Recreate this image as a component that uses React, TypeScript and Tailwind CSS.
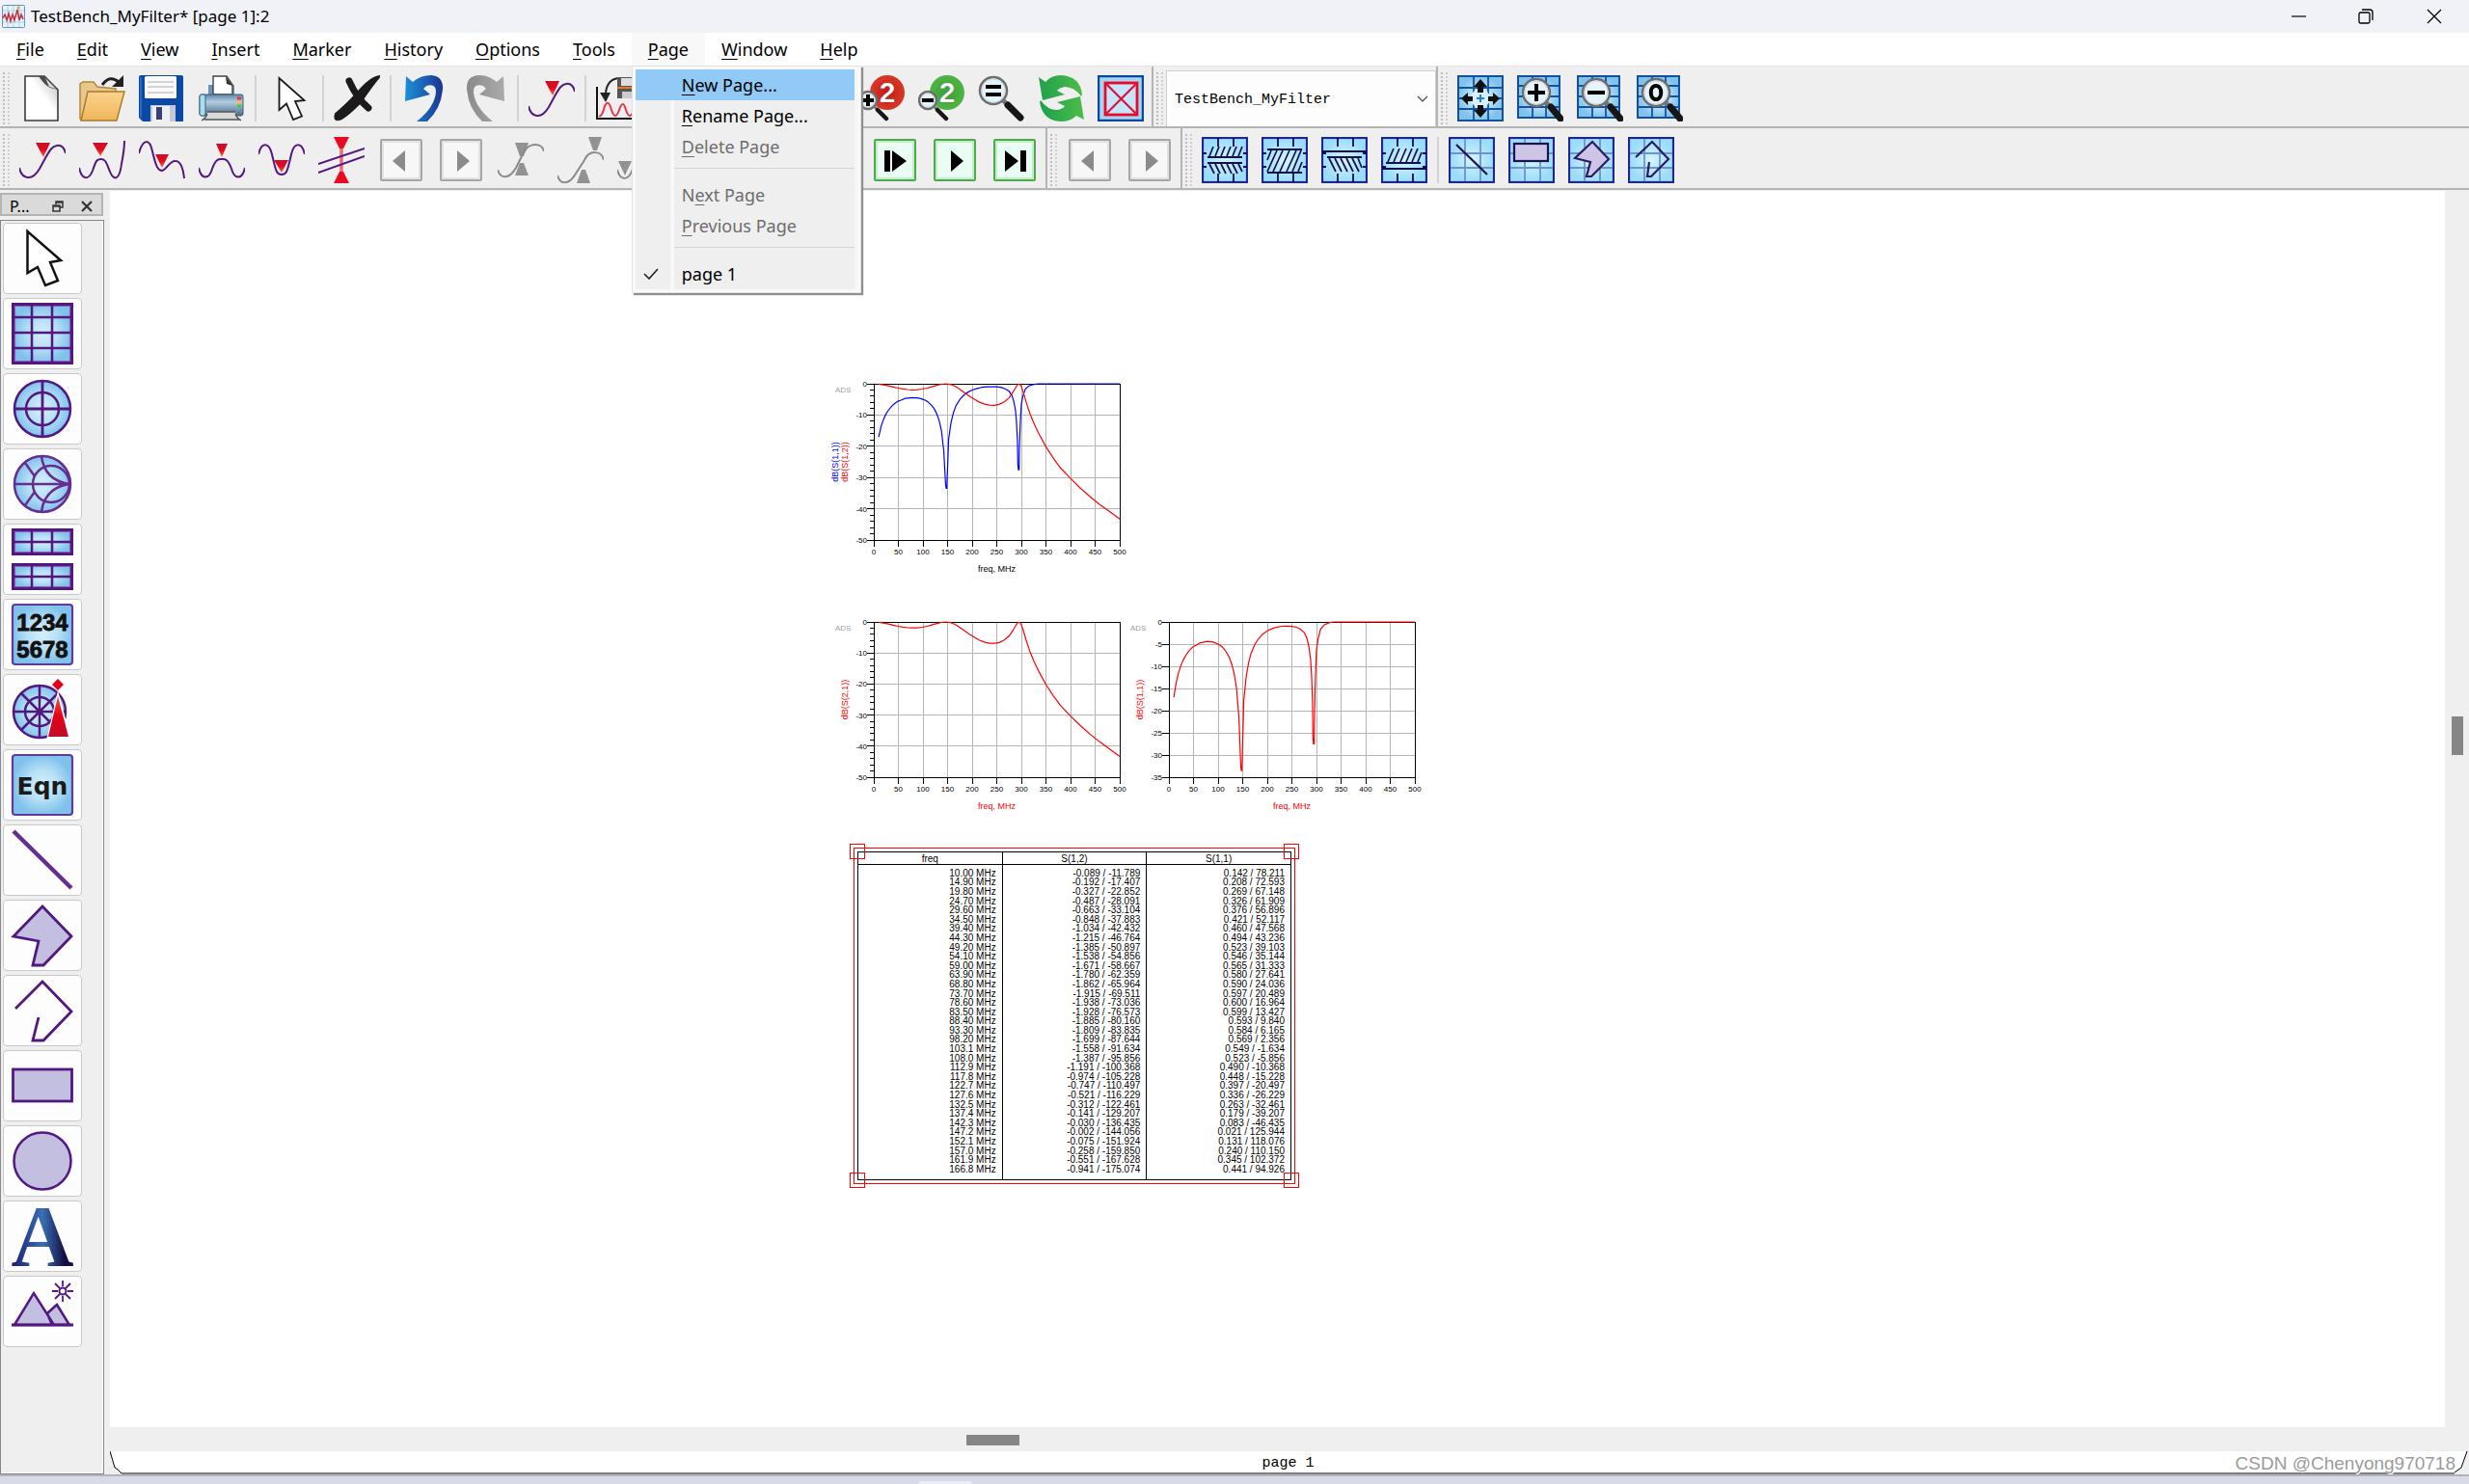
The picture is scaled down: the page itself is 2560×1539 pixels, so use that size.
import React from "react";

type Pt = [number, number];

/* ---------- shared pieces ---------- */

function Svg48({ children }: { children: React.ReactNode }) {
  return (
    <svg viewBox="0 0 48 48" className="size-12" fill="none" aria-hidden="true">
      {children}
    </svg>
  );
}

function ToolButton({ label, children }: { label: string; children: React.ReactNode }) {
  return (
    <button type="button" aria-label={label} className="flex h-14 w-[62px] shrink-0 items-center justify-center">
      {children}
    </button>
  );
}

const Sep = () => <div className="mx-[3px] h-12 w-[2px] shrink-0 bg-[#d2d2d2]" />;

function Handle() {
  return (
    <div className="flex w-[13px] shrink-0 items-center justify-center gap-[3px]">
      <div className="h-[54px] border-l-2 border-dotted border-[#bdbdbd]" />
      <div className="h-[54px] border-l-2 border-dotted border-[#cfcfcf]" />
    </div>
  );
}

function Group({ children, last }: { children: React.ReactNode; last?: boolean }) {
  return (
    <div
      className={
        last
          ? "flex flex-1 items-center border-b-2 border-[#b4b4b4] pt-1"
          : "flex items-center border-r-2 border-b-2 border-[#b4b4b4] pt-1 pr-px"
      }
    >
      <Handle />
      {children}
    </div>
  );
}

/* ---------- toolbar icons ---------- */

function Defs() {
  return (
    <svg className="absolute size-0" aria-hidden="true">
      <defs>
        <linearGradient id="gPaper" x1="0" y1="1" x2="1" y2="0">
          <stop offset="0.55" stopColor="#fff" />
          <stop offset="1" stopColor="#b9b9bd" />
        </linearGradient>
        <linearGradient id="gFolder" x1="0" y1="0" x2="0" y2="1">
          <stop offset="0" stopColor="#fbd38c" />
          <stop offset="1" stopColor="#efb65c" />
        </linearGradient>
        <linearGradient id="gPrint" x1="0" y1="0" x2="0" y2="1">
          <stop offset="0" stopColor="#5f86a8" />
          <stop offset="0.35" stopColor="#b4cde0" />
          <stop offset="1" stopColor="#47698a" />
        </linearGradient>
        <linearGradient id="gUndo" x1="0" y1="0" x2="1" y2="0">
          <stop offset="0" stopColor="#1c92d6" />
          <stop offset="1" stopColor="#1b3494" />
        </linearGradient>
        <linearGradient id="gRedo" x1="0" y1="0" x2="1" y2="0">
          <stop offset="0" stopColor="#ababab" />
          <stop offset="1" stopColor="#8a8a8a" />
        </linearGradient>
        <linearGradient id="gTri" x1="0" y1="0" x2="0" y2="1">
          <stop offset="0" stopColor="#c4122c" />
          <stop offset="0.5" stopColor="#e30a1c" />
          <stop offset="1" stopColor="#ff6a3c" />
        </linearGradient>
        <radialGradient id="gRed">
          <stop offset="0" stopColor="#c11a1a" />
          <stop offset="1" stopColor="#d83a26" />
        </radialGradient>
        <radialGradient id="gGreen">
          <stop offset="0" stopColor="#3c9f34" />
          <stop offset="1" stopColor="#4db545" />
        </radialGradient>
        <radialGradient id="gSky">
          <stop offset="0" stopColor="#d3effc" />
          <stop offset="0.5" stopColor="#b8e0f6" />
          <stop offset="1" stopColor="#80c2ec" />
        </radialGradient>
        <radialGradient id="gCyan">
          <stop offset="0" stopColor="#d6f4fe" />
          <stop offset="1" stopColor="#9adcf9" />
        </radialGradient>
        <linearGradient id="gRefresh" x1="0" y1="0" x2="1" y2="0">
          <stop offset="0" stopColor="#1fa04c" />
          <stop offset="1" stopColor="#4bbd49" />
        </linearGradient>
        <linearGradient id="gLetter" x1="0" y1="0" x2="1" y2="0">
          <stop offset="0" stopColor="#1d1a70" />
          <stop offset="0.5" stopColor="#3a70b4" />
          <stop offset="0.85" stopColor="#141043" />
        </linearGradient>
        <linearGradient id="gCone" x1="0" y1="0" x2="0" y2="1">
          <stop offset="0" stopColor="#ee5a32" />
          <stop offset="0.5" stopColor="#e3001b" />
          <stop offset="1" stopColor="#c10d26" />
        </linearGradient>
      </defs>
    </svg>
  );
}

const NewIcon = () => (
  <Svg48>
    <path d="M6 1H26L40 15V47H6Z" fill="url(#gPaper)" stroke="#3a3a3a" strokeWidth="1.6" />
    <path d="M20 1H26L40 15L32 13Q26 10 20 1Z" fill="#4a4a4a" />
    <path d="M27 3L38 14L31 12Z" fill="#d9d9d9" />
  </Svg48>
);
const OpenIcon = () => (
  <Svg48>
    <path d="M1 45V9L4 7H15L19 12L38 14V20L10 30L3 46Z" fill="#e6c88f" stroke="#b5883a" strokeWidth="1.5" />
    <path d="M9 17H47L39 47H2Z" fill="url(#gFolder)" stroke="#a8782a" strokeWidth="1.4" />
    <path d="M24 10Q32 -1 41 7" stroke="#222" strokeWidth="3" />
    <path d="M46 0V12H34Z" fill="#222" />
  </Svg48>
);
const SaveIcon = () => (
  <Svg48>
    <path d="M0 2Q0 0 2 0H44Q46 0 46 2V48H4L0 44Z" fill="#0b49a5" />
    <path d="M2 2V44" stroke="#2f74cc" strokeWidth="1.6" />
    <rect x="6" y="1" width="33" height="23" rx="1.5" fill="#fafafa" />
    <path d="M9 7H36M9 12H36M9 18H36" stroke="#c6c6c6" strokeWidth="1.5" />
    <rect x="12" y="31" width="26" height="17" fill="#c4c8d8" />
    <rect x="14" y="32" width="18" height="16" fill="#f0f0f3" />
    <rect x="18" y="33" width="6" height="13" fill="#3c3f74" />
  </Svg48>
);
const PrintIcon = () => (
  <Svg48>
    <rect x="10" y="10" width="27" height="14" fill="#6d93b3" />
    <path d="M15 20V1H29L35 10V20Z" fill="#fff" stroke="#444" strokeWidth="1.4" />
    <path d="M28 1L35 11L29 9Z" fill="#333" />
    <rect x="1" y="20" width="45" height="22" rx="2" fill="url(#gPrint)" stroke="#3c6079" />
    <rect x="1" y="20" width="6" height="22" rx="2" fill="#a8dcf1" stroke="#3c6079" />
    <path d="M40 24H44" stroke="#e8344a" strokeWidth="3" />
    <path d="M40 28H44" stroke="#f3c33a" strokeWidth="3" />
    <path d="M40 32H44" stroke="#4fc34a" strokeWidth="3" />
    <path d="M9 38H38Q38 43 44 47H3Q9 43 9 38Z" fill="#d9d9d9" />
    <path d="M9 38H38M3 47Q8 44 9 40M44 47Q39 44 38 40M6 46H42" stroke="#555" strokeWidth="1.3" />
  </Svg48>
);
const CursorIcon = () => (
  <Svg48>
    <path d="M13.500 3V36L21 29.500L28 46L37 42.500L30 27L39.500 26Z" fill="#fff" stroke="#1a1a1a" strokeWidth="1.8" />
  </Svg48>
);
const DeleteIcon = () => (
  <Svg48>
    <path d="M16 6Q24 24 36 34" stroke="#1c1a1b" strokeWidth="7" strokeLinecap="round" />
    <path d="M48 1Q38 2 24 19Q12 32 2 40Q0 47 5 46Q10 46 28 28Q40 10 48 1Z" fill="#1c1a1b" stroke="#1c1a1b" strokeWidth="2" />
  </Svg48>
);
const UNDO = "M7 1L14 7Q22 0 33 0Q46 1 45 15Q43 35 29 48H18Q37 33 38 17Q38 8 28 11L25 14L32 20L6 27Z";
const UndoIcon = () => (
  <Svg48>
    <path transform="translate(-2 0)" d={UNDO} fill="url(#gUndo)" />
  </Svg48>
);
const RedoIcon = () => (
  <Svg48>
    <path transform="matrix(-1 0 0 1 51 0)" d={UNDO} fill="url(#gRedo)" />
  </Svg48>
);

function Wave({ d, tri, muted }: { d: string; tri: string; muted?: boolean }) {
  return (
    <Svg48>
      {muted ? <path d={tri} fill="#929292" /> : <path d={tri} fill="url(#gTri)" />}
      <path d={d} stroke={muted ? "#8a8a8a" : "#52187f"} strokeWidth="2" />
    </Svg48>
  );
}
const Mark1 = () => <Wave d="M0 32C2 42 12 48 21 33L27 22C32 13 34 10 39 9C44 8 47 12 48 17" tri="M17 6H32L25 21Z" />;
const Mark2 = () => <Wave d="M0 32C3 45 10 45 14 35C18 23 19 23 23 23C28 23 29 29 32 36C36 46 42 45 44 28C46 18 47 10 47 4" tri="M14 6H30L22 20Z" />;
const Mark3 = () => <Wave d="M0 17C4 2 11 1 14 15C18 32 20 35 24 35C29 34 32 24 38 25C44 25 46 34 47 43" tri="M17 18H31L24 32Z" />;
const Mark4 = () => <Wave d="M0 32C3 45 11 44 14 33C18 22 21 23 24 23C27 23 30 22 34 33C37 44 45 45 48 32" tri="M18 7H30L24 21Z" />;
const Mark5 = () => <Wave d="M0 18C3 5 11 5 14 18C18 36 19 39 24 39C29 39 30 36 34 18C37 5 45 5 48 18" tri="M16 24H31L24 37Z" />;
const Mark6 = () => (
  <Svg48>
    <path d="M24 8V40" stroke="#f2667c" strokeWidth="3.500" />
    <path d="M16 0H32L26 12H22ZM16 48H32L26 36H22Z" fill="#ea0a20" />
    <path d="M0 28L48 12M0 37L48 20" stroke="#52187f" strokeWidth="2" />
  </Svg48>
);
const MutedTwin = () => <Wave muted d="M0 34C3 44 12 44 19 32L27 16C32 6 46 5 48 15" tri="M18 6H32L27 20H23ZM18 40H32L27 27H23Z" />;
const MutedSlope = () => <Wave muted d="M0 40C3 50 12 50 19 38L28 24C33 13 46 14 48 24" tri="M32 0H46L41 14H37ZM20 48H34L29 34H25Z" />;
const MutedValley = () => <Wave muted d="M0 34C3 46 12 46 16 33C20 22 28 22 32 33C36 46 45 46 48 34" tri="M1 25H15L8 40Z" />;

function NavIcon({ d, active }: { d: string; active?: boolean }) {
  return (
    <Svg48>
      {active ? (
        <rect x="3" y="3" width="42" height="42" rx="1" fill="#eafdf3" stroke="#4bab4a" strokeWidth="2" />
      ) : (
        <rect x="3" y="3" width="42" height="42" rx="1" fill="#f7f7f7" stroke="#a6a6a6" strokeWidth="2" />
      )}
      <rect x="5" y="5" width="38" height="38" stroke={active ? "#c6ebcd" : "#e2e2e2"} strokeWidth="2" />
      <path d={d} fill={active ? "#000" : "#8b8b8b"} />
    </Svg48>
  );
}
const LEFT = "M15 25L28 14V36Z";
const RIGHT = "M33 25L20 14V36Z";

const ReadDataIcon = () => (
  <Svg48>
    <path d="M1 12V45H48" stroke="#111" strokeWidth="2" />
    <path d="M3 42Q6 44 9 32Q13 24 16 36Q20 48 24 36Q28 24 31 36Q35 48 39 36Q43 24 46 42" stroke="#e8344a" strokeWidth="2" />
    <path d="M25 3Q12 3 10 18" stroke="#222" strokeWidth="2" />
    <path d="M4 18H15L10 28Z" fill="#222" />
    <path d="M22 2H46V24H22Z" fill="#555" />
    <path d="M26 3H42V11H26Z" fill="#ddd" />
    <path d="M22 12H46V14H22Z" fill="#e8752a" />
    <path d="M27 17H40V24H27Z" fill="#ccc" />
  </Svg48>
);

function Lens({ x, y, r, sign, end }: { x: number; y: number; r: number; sign: string; end: Pt }) {
  const k = r * 0.75;
  return (
    <>
      <path d={`M${x + k} ${y + k}L${end[0]} ${end[1]}`} stroke="#777" strokeWidth={r / 3} />
      <path d={`M${x + r + 1} ${y + r + 1}L${end[0]} ${end[1]}`} stroke="#161616" strokeWidth={r / 2} strokeLinecap="round" />
      <circle cx={x} cy={y} r={r} fill="#e3f4fd" stroke="#6e6e6e" strokeWidth="2.500" />
      <circle cx={x} cy={y} r={r - 2} stroke="#d5d5d5" strokeWidth="1" />
      <path d={sign} stroke="#000" strokeWidth="4" />
    </>
  );
}

function Zoom2({ fill, sign }: { fill: string; sign: string }) {
  return (
    <Svg48>
      <circle cx="30" cy="18" r="18" fill={fill} />
      <text x="30" y="28" textAnchor="middle" fontSize="30" fontWeight="700" fontFamily="Liberation Sans, sans-serif" fill="#fff" stroke="#00000055" strokeWidth="0.6">2</text>
      <Lens x={10} y={26} r={9} sign={sign} end={[29, 45]} />
    </Svg48>
  );
}
const ZoomEqIcon = () => (
  <Svg48>
    <Lens x={16} y={16} r={14} sign="M8 12H24M8 20H24" end={[44, 44]} />
  </Svg48>
);
const RefreshIcon = () => (
  <Svg48>
    <path d="M1 2L8 7Q14 0 24 0Q44 1 46 20L45 22Q38 12 28 12Q22 13 20 16L28 20L5 26Z" fill="url(#gRefresh)" />
    <path d="M48 46L40 42Q34 48 24 48Q5 47 2 28L3 26Q10 36 20 36Q26 35 28 32L20 28L44 22Z" fill="url(#gRefresh)" />
  </Svg48>
);
const ClearIcon = () => (
  <Svg48>
    <rect x="1" y="1" width="46" height="46" fill="#a6d4f2" stroke="#0a479b" strokeWidth="2.500" />
    <rect x="8" y="8" width="33" height="33" fill="#c5e5f8" stroke="#ea0a28" strokeWidth="2.800" />
    <path d="M9 9L40 40M40 9L9 40" stroke="#d8143a" strokeWidth="2.200" />
  </Svg48>
);

function GridBase({ full }: { full?: boolean }) {
  const s = full ? 46 : 43;
  return (
    <>
      <rect x="1" y="1" width={s} height={s} fill="url(#gSky)" stroke="#10509e" strokeWidth="2" />
      <path d={full ? "M17 1V47M32 1V47M1 13H47M1 24H47M1 35H47" : "M16 1V44M30 1V44M1 11H44M1 22H44M1 33H44"} stroke="#14529f" strokeWidth="1.800" />
    </>
  );
}
const FitIcon = () => (
  <Svg48>
    <GridBase full />
    <circle cx="24" cy="24" r="10" fill="#d6effb" />
    <path d="M20 24H28M24 20V28" stroke="#2b7fd0" strokeWidth="2" />
    <path d="M24 4L31 12H27V18H21V12H17ZM24 44L31 36H27V31H21V36H17ZM4 24L11 18V22H16V27H11V31ZM44 24L37 18V22H32V27H37V31Z" fill="#111" />
  </Svg48>
);
const GridLens = ({ sign }: { sign: string }) => (
  <Svg48>
    <GridBase />
    <Lens x={20} y={18} r={14} sign={sign} end={[45, 45]} />
  </Svg48>
);

function MaskIcon({ d, rails }: { d: string; rails: string }) {
  return (
    <Svg48>
      <rect x="1" y="1" width="46" height="46" fill="url(#gCyan)" stroke="#20278c" strokeWidth="2.200" />
      <path d="M17 1V10M33 1V10M17 38V47M33 38V47M1 17H5M43 17H47M1 31H5M43 31H47" stroke="#12104f" strokeWidth="1.800" />
      <path d={rails} stroke="#12104f" strokeWidth="2.200" />
      <path d={d} stroke="#12104f" strokeWidth="1.700" />
    </Svg48>
  );
}
function ShapeIcon({ children }: { children: React.ReactNode }) {
  return (
    <Svg48>
      <rect x="1" y="1" width="46" height="46" fill="url(#gCyan)" stroke="#20278c" strokeWidth="2.200" />
      <path d="M17 2V46M33 2V46M2 17H46M2 32H46" stroke="#6e93c9" strokeWidth="1.800" />
      {children}
    </Svg48>
  );
}

/* ---------- palette icons ---------- */

const P = "#52187f";
const Svg64 = ({ children }: { children: React.ReactNode }) => (
  <svg viewBox="0 0 64 64" className="size-16 overflow-visible" fill="none" aria-hidden="true">
    {children}
  </svg>
);

const MiniGrid = ({ y, h, rows }: { y: number; h: number; rows: number[] }) => (
  <>
    <rect x="1.500" y={y + 1.5} width="61" height={h - 3} fill="url(#gSky)" stroke={P} strokeWidth="3" />
    <path d={`M3.500 ${y + 3.5}H60.500V${y + h - 3.5}H3.500Z`} stroke="#8a63ad" strokeWidth="1.200" />
    <path d={`M21 ${y}V${y + h}M42 ${y}V${y + h}`} stroke={P} strokeWidth="2.500" />
    {rows.map((r) => (
      <path key={r} d={`M0 ${r}H64`} stroke={P} strokeWidth="2.500" />
    ))}
  </>
);

const palette: { label: string; icon: React.ReactNode }[] = [
  {
    label: "Select",
    icon: <path d="M16.500 4L16.500 47L27 41L35 60L48 55L40 36L51 34Z" fill="#fff" stroke="#111" strokeWidth="2.500" />,
  },
  { label: "Rectangular plot", icon: <MiniGrid y={0} h={64} rows={[15, 31, 47]} /> },
  {
    label: "Polar plot",
    icon: (
      <>
        <circle cx="32" cy="32" r="29" fill="url(#gSky)" stroke={P} strokeWidth="2.500" />
        <circle cx="32" cy="32" r="17" stroke={P} strokeWidth="2.500" />
        <path d="M32 3V61M3 32H61" stroke={P} strokeWidth="2.800" />
      </>
    ),
  },
  {
    label: "Smith chart",
    icon: (
      <>
        <circle cx="32" cy="32" r="29" fill="url(#gSky)" stroke="#662d91" strokeWidth="2.500" />
        <circle cx="41" cy="32" r="19" stroke="#662d91" strokeWidth="2.500" />
        <path d="M3 32H61M31 3Q34 28 60 32Q34 36 31 61M14 10L24 24M14 54L24 40" stroke="#662d91" strokeWidth="2.500" />
      </>
    ),
  },
  {
    label: "Stacked plot",
    icon: (
      <>
        <MiniGrid y={0} h={28} rows={[14]} />
        <MiniGrid y={36} h={28} rows={[50]} />
      </>
    ),
  },
  {
    label: "List",
    icon: (
      <>
        <rect x="1" y="1" width="62" height="62" rx="3" fill="url(#gSky)" stroke="#613a9a" strokeWidth="2.200" />
        <text x="32" y="28" textAnchor="middle" fontFamily="Liberation Sans, sans-serif" fontWeight="700" fontSize="24" fill="#111" stroke="#111" strokeWidth="0.8">1234</text>
        <text x="32" y="56" textAnchor="middle" fontFamily="Liberation Sans, sans-serif" fontWeight="700" fontSize="24" fill="#111" stroke="#111" strokeWidth="0.8">5678</text>
      </>
    ),
  },
  {
    label: "Antenna plot",
    icon: (
      <>
        <circle cx="29" cy="34" r="27" fill="url(#gSky)" stroke={P} strokeWidth="2.500" />
        <circle cx="29" cy="34" r="15" stroke={P} strokeWidth="2.500" />
        <path d="M29 7V61M2 34H56M10 15L48 53M10 53L48 15" stroke={P} strokeWidth="2.500" />
        <path d="M48 12L62 64H36Z" fill="#fff" />
        <path d="M48 18L59 60H38Z" fill="url(#gCone)" />
        <path d="M48 0L54 6L48 12L42 6Z" fill="#e3001b" />
      </>
    ),
  },
  {
    label: "Equation",
    icon: (
      <>
        <rect x="1" y="1" width="62" height="62" rx="3" fill="url(#gSky)" stroke="#613a9a" strokeWidth="2.200" />
        <text x="32" y="42" textAnchor="middle" fontFamily="DejaVu Sans, sans-serif" fontWeight="700" fontSize="25" fill="#1a1a1a">Eqn</text>
      </>
    ),
  },
  { label: "Line", icon: <path d="M2 2L62 61" stroke="#662d91" strokeWidth="4.500" /> },
  { label: "Polygon", icon: <path d="M32 2L62 33L33 63H22L28 38L2 33Z" fill="#c3bfe0" stroke={P} strokeWidth="2.800" /> },
  { label: "Polyline", icon: <path d="M4 30L32 2L62 33L33 63H22L28 39" stroke={P} strokeWidth="2.800" /> },
  { label: "Rectangle", icon: <rect x="1.500" y="15" width="61" height="33" fill="#c3bfe0" stroke={P} strokeWidth="2.800" /> },
  { label: "Circle", icon: <circle cx="32" cy="32" r="29.500" fill="#c3bfe0" stroke={P} strokeWidth="2.500" /> },
  {
    label: "Text",
    icon: <text x="32" y="63" textAnchor="middle" fontFamily="Liberation Serif, serif" fontWeight="700" fontSize="90" fill="url(#gLetter)">A</text>,
  },
  {
    label: "Picture",
    icon: (
      <>
        <path d="M3 46L23 13L44 46ZM37 34L47 25L60 46H42Z" fill="#c3bfe0" stroke={P} strokeWidth="2.500" />
        <path d="M0 46H64" stroke={P} strokeWidth="3" />
        <circle cx="53" cy="11" r="3.500" stroke={P} strokeWidth="2" />
        <path d="M53 0V6M53 16V22M42 11H48M58 11H64M45 3L50 8M56 14L61 19M61 3L56 8M50 14L45 19" stroke={P} strokeWidth="1.800" />
      </>
    ),
  },
];

/* ---------- plots ---------- */

const s11: Pt[] = [
  [10, -17], [14.9, -13.6], [19.8, -11.4], [24.7, -9.7], [29.6, -8.5], [34.5, -7.5], [39.4, -6.7], [44.3, -6.1],
  [49.2, -5.6], [54.1, -5.3], [59, -5], [63.9, -4.7], [68.8, -4.6], [73.7, -4.5], [78.6, -4.4], [83.5, -4.5],
  [88.4, -4.5], [93.3, -4.7], [98.2, -4.9], [103.1, -5.2], [108, -5.6], [112.9, -6.2], [117.8, -7], [122.7, -8],
  [127.6, -9.5], [132.5, -11.6], [137.4, -14.9], [142.3, -21.6], [146, -32.5], [147.2, -33.5], [148.4, -33.5], [152.1, -17.7],
  [157, -12.4], [161.9, -9.2], [166.8, -7.1], [175, -5], [182, -3.8], [190, -2.8], [200, -2], [210, -1.5],
  [220, -1.15], [230, -0.98], [240, -0.95], [250, -1], [260, -1.2], [268, -1.7], [275, -2.4], [281, -3.8],
  [285, -5.8], [288, -8.5], [290, -12], [292, -18], [293, -26], [294, -27.5], [295.5, -27.5], [296, -20],
  [298, -12], [300, -6.5], [303, -4], [308, -1.7], [315, -0.7], [325, -0.2], [335, 0], [500, 0],
];
const s21: Pt[] = [
  [10, -0.09], [19.8, -0.33], [29.6, -0.66], [39.4, -1.03], [49.2, -1.39], [59, -1.67], [68.8, -1.86], [78.6, -1.94],
  [88.4, -1.89], [98.2, -1.7], [108, -1.39], [117.8, -0.97], [127.6, -0.52], [137.4, -0.14], [147.2, 0], [157, -0.26],
  [166.8, -0.94], [175, -1.8], [185, -2.9], [195, -4], [205, -5], [215, -5.9], [225, -6.5], [235, -6.85],
  [245, -6.9], [255, -6.6], [265, -5.8], [275, -4.5], [283, -2.7], [288, -1.3], [293, -0.2], [297, -0.2],
  [300, -0.9], [305, -3.2], [310, -6], [318, -9.8], [325, -12.5], [335, -15.8], [350, -20.2], [365, -23.8],
  [380, -27], [400, -30.3], [420, -33.4], [440, -36.2], [460, -38.7], [480, -41], [500, -43.3],
];

interface PlotProps {
  min: number;
  step: number;
  minor: number;
  traces: { data: Pt[]; color: string; name: string }[];
  axisColor: string;
  height: number;
}

function Plot({ min, step, minor, traces, axisColor, height }: PlotProps) {
  const W = 255;
  const H = height;
  const X0 = 50;
  const Y0 = 10;
  const x = (f: number) => X0 + (f / 500) * W;
  const y = (v: number) => Y0 + (v / min) * H;
  const ys: number[] = [];
  for (let v = 0; v >= min; v -= step) ys.push(v);
  const minors: number[] = [];
  if (minor) for (let v = 0; v >= min; v -= minor) minors.push(v);
  const xs = Array.from({ length: 11 }, (_, i) => i * 50);
  return (
    <svg width="320" height="215" fill="none" fontFamily="Liberation Sans, sans-serif" role="img" aria-label={traces.map((t) => t.name).join(", ")}>
      <g shapeRendering="crispEdges">
        {xs.slice(1, -1).map((f) => (
          <path key={f} d={`M${x(f)} ${Y0}V${Y0 + H}`} stroke="#b5b5b5" />
        ))}
        {ys.slice(1, -1).map((v) => (
          <path key={v} d={`M${X0} ${y(v)}H${X0 + W}`} stroke="#b5b5b5" />
        ))}
        {xs.map((f) => (
          <path key={f} d={`M${x(f)} ${Y0 + H}v7`} stroke="#000" />
        ))}
        {ys.map((v) => (
          <path key={v} d={`M${X0 - 7} ${y(v)}h7`} stroke="#000" />
        ))}
        {minors.map((v) => (
          <path key={v} d={`M${X0 - 4} ${y(v)}h4`} stroke="#000" />
        ))}
        <rect x={X0} y={Y0} width={W} height={H} stroke="#000" />
      </g>
      {traces.map((t) => (
        <path key={t.name} d={"M" + t.data.map(([f, v]) => `${x(f).toFixed(1)} ${y(v).toFixed(1)}`).join("L")} stroke={t.color} strokeWidth="1.200" />
      ))}
      <g fill="#000" fontSize="8">
        {xs.map((f) => (
          <text key={f} x={x(f)} y={Y0 + H + 15} textAnchor="middle">{f}</text>
        ))}
        {ys.map((v) => (
          <text key={v} x={X0 - 7} y={y(v) + 3} textAnchor="end">{v}</text>
        ))}
      </g>
      <text x={X0 + W / 2} y={Y0 + H + 33} textAnchor="middle" fontSize="9" fill={axisColor}>freq, MHz</text>
      <text x="10" y="19" fontSize="8" fill="#a0a0a0">ADS</text>
      {traces.map((t, i) => {
        const tx = 21 - (traces.length - 1 - i) * 10;
        return (
          <text key={t.name} transform={`translate(${tx + 2} ${Y0 + H / 2}) rotate(-90)`} textAnchor="middle" fontSize="9" fill={t.color}>{t.name}</text>
        );
      })}
    </svg>
  );
}

const rows: [string, string, string][] = [
  ["10.00 MHz", "-0.089 / -11.789", "0.142 / 78.211"],
  ["14.90 MHz", "-0.192 / -17.407", "0.208 / 72.593"],
  ["19.80 MHz", "-0.327 / -22.852", "0.269 / 67.148"],
  ["24.70 MHz", "-0.487 / -28.091", "0.326 / 61.909"],
  ["29.60 MHz", "-0.663 / -33.104", "0.376 / 56.896"],
  ["34.50 MHz", "-0.848 / -37.883", "0.421 / 52.117"],
  ["39.40 MHz", "-1.034 / -42.432", "0.460 / 47.568"],
  ["44.30 MHz", "-1.215 / -46.764", "0.494 / 43.236"],
  ["49.20 MHz", "-1.385 / -50.897", "0.523 / 39.103"],
  ["54.10 MHz", "-1.538 / -54.856", "0.546 / 35.144"],
  ["59.00 MHz", "-1.671 / -58.667", "0.565 / 31.333"],
  ["63.90 MHz", "-1.780 / -62.359", "0.580 / 27.641"],
  ["68.80 MHz", "-1.862 / -65.964", "0.590 / 24.036"],
  ["73.70 MHz", "-1.915 / -69.511", "0.597 / 20.489"],
  ["78.60 MHz", "-1.938 / -73.036", "0.600 / 16.964"],
  ["83.50 MHz", "-1.928 / -76.573", "0.599 / 13.427"],
  ["88.40 MHz", "-1.885 / -80.160", "0.593 / 9.840"],
  ["93.30 MHz", "-1.809 / -83.835", "0.584 / 6.165"],
  ["98.20 MHz", "-1.699 / -87.644", "0.569 / 2.356"],
  ["103.1 MHz", "-1.558 / -91.634", "0.549 / -1.634"],
  ["108.0 MHz", "-1.387 / -95.856", "0.523 / -5.856"],
  ["112.9 MHz", "-1.191 / -100.368", "0.490 / -10.368"],
  ["117.8 MHz", "-0.974 / -105.228", "0.448 / -15.228"],
  ["122.7 MHz", "-0.747 / -110.497", "0.397 / -20.497"],
  ["127.6 MHz", "-0.521 / -116.229", "0.336 / -26.229"],
  ["132.5 MHz", "-0.312 / -122.461", "0.263 / -32.461"],
  ["137.4 MHz", "-0.141 / -129.207", "0.179 / -39.207"],
  ["142.3 MHz", "-0.030 / -136.435", "0.083 / -46.435"],
  ["147.2 MHz", "-0.002 / -144.056", "0.021 / 125.944"],
  ["152.1 MHz", "-0.075 / -151.924", "0.131 / 118.076"],
  ["157.0 MHz", "-0.258 / -159.850", "0.240 / 110.150"],
  ["161.9 MHz", "-0.551 / -167.628", "0.345 / 102.372"],
  ["166.8 MHz", "-0.941 / -175.074", "0.441 / 94.926"],
];

function DataTable() {
  return (
    <div className="absolute top-[681px] left-[771px] border border-[#ff0000] p-[3px]">
      <table className="h-[341px] w-[450px] table-fixed border-collapse border border-black font-['Liberation_Sans',sans-serif] text-[10px] leading-[9px]">
        <thead>
          <tr className="h-[13px] border-b border-black">
            {["freq", "S(1,2)", "S(1,1)"].map((h) => (
              <th key={h} className="border-x border-black p-0 font-normal">{h}</th>
            ))}
          </tr>
        </thead>
        <tbody>
          <tr className="h-[4px]">
            <td className="border-x border-black p-0" />
            <td className="border-x border-black p-0" />
            <td className="border-x border-black p-0" />
          </tr>
          {rows.map((r) => (
            <tr key={r[0]}>
              {r.map((c, i) => (
                <td key={i} className="border-x border-black py-0 pr-1.5 pl-0 text-right whitespace-nowrap">{c}</td>
              ))}
            </tr>
          ))}
          <tr className="h-[6px]">
            <td className="border-x border-black p-0" />
            <td className="border-x border-black p-0" />
            <td className="border-x border-black p-0" />
          </tr>
        </tbody>
      </table>
      <span className="absolute -top-[5px] -left-[5px] size-4 border border-[#ff0000]" />
      <span className="absolute -top-[5px] -right-[5px] size-4 border border-[#ff0000]" />
      <span className="absolute -bottom-[5px] -left-[5px] size-4 border border-[#ff0000]" />
      <span className="absolute -right-[5px] -bottom-[5px] size-4 border border-[#ff0000]" />
    </div>
  );
}

/* ---------- menus ---------- */

const Accel = ({ text, at = 0 }: { text: string; at?: number }) => (
  <span>
    {text.slice(0, at)}
    <span className="underline decoration-1 underline-offset-[3px]">{text[at]}</span>
    {text.slice(at + 1)}
  </span>
);

const menuItem = "flex h-8 w-full items-center pl-[48px] text-left whitespace-nowrap";

function PageMenu() {
  return (
    <div role="menu" className="absolute top-full left-0 z-10 w-[238px] border border-[#e2e2e2] bg-[#f9f9f9] p-[3px] shadow-[2px_2px_1px_#8f8f8f]">
      <div className="border-r-[3px] border-[#f6f6f6] bg-[linear-gradient(90deg,#efefef_36px,#f8f8f8_36px,#f8f8f8_40px,#efefef_40px)]">
        <button type="button" role="menuitem" className={menuItem + " bg-[#91c9f7]"}><Accel text="New Page..." /></button>
        <button type="button" role="menuitem" className={menuItem}><Accel text="Rename Page..." /></button>
        <button type="button" role="menuitem" disabled className={menuItem + " text-[#6d6d6d]"}><Accel text="Delete Page" /></button>
        <hr className="mt-[6px] mb-[11px] ml-10 border-[#d4d4d4]" />
        <button type="button" role="menuitem" disabled className={menuItem + " text-[#6d6d6d]"}><Accel text="Next Page" at={1} /></button>
        <button type="button" role="menuitem" disabled className={menuItem + " text-[#6d6d6d]"}><Accel text="Previous Page" /></button>
        <hr className="mt-[6px] mb-[11px] ml-10 border-[#d4d4d4]" />
        <button type="button" role="menuitemcheckbox" aria-checked="true" className="flex h-8 w-full items-center text-left">
          <svg viewBox="0 0 16 12" className="mr-[24px] ml-2 h-3 w-4" fill="none" aria-hidden="true">
            <path d="M1 6L6 11L15 1" stroke="#222" strokeWidth="1.600" />
          </svg>
          page 1
        </button>
      </div>
    </div>
  );
}

const menus = ["File", "Edit", "View", "Insert", "Marker", "History", "Options", "Tools", "Page", "Window", "Help"];

/* ---------- application ---------- */

export default function App() {
  return (
    <div className="flex min-h-screen w-full flex-col overflow-hidden bg-[#efefef] font-['Noto_Sans',sans-serif] text-[18px] text-black">
      <Defs />
      <header className="flex h-[34px] items-center bg-[#f1f2f8] text-[17px]">
        <svg viewBox="0 0 24 24" className="mr-[6px] ml-[2px] size-6" fill="none" aria-hidden="true">
          <rect x="0.500" y="0.500" width="23" height="23" rx="1" fill="#e8f3fa" stroke="#5b94bd" />
          <path d="M6 1V23M12 1V23M18 1V23M1 6H23M1 12H23M1 18H23" stroke="#a9d3ea" />
          <path d="M1 14L3 10L5 16L7 9L9 17L11 10L13 16L16 5L18 16L20 10L22 15" stroke="#c3313f" strokeWidth="1.500" />
          <circle cx="17" cy="3" r="1.500" fill="#f0a030" />
        </svg>
        <h1 className="flex-1">TestBench_MyFilter* [page 1]:2</h1>
        <button type="button" aria-label="Minimize" className="flex h-full w-[69px] items-center justify-center">
          <svg viewBox="0 0 16 16" className="size-4"><path d="M0 8H15" stroke="#000" strokeWidth="1.200" /></svg>
        </button>
        <button type="button" aria-label="Restore" className="flex h-full w-[70px] items-center justify-center">
          <svg viewBox="0 0 16 16" className="size-4" fill="none" stroke="#000" strokeWidth="1.300">
            <rect x="1" y="4" width="11" height="11" rx="1.500" />
            <path d="M4 1H12Q15 1 15 4V12" />
          </svg>
        </button>
        <button type="button" aria-label="Close" className="flex h-full w-[72px] items-center justify-center">
          <svg viewBox="0 0 16 16" className="size-4"><path d="M1 1L15 15M15 1L1 15" stroke="#000" strokeWidth="1.300" /></svg>
        </button>
      </header>

      <nav className="flex h-[35px] border-b border-[#e4e4e4] bg-white">
        {menus.map((m) => (
          <div key={m} className="relative h-full">
            <button type="button" className={m === "Page" ? "h-full bg-[#f8f8f8] px-[17px]" : "h-full px-[17px]"}>
              <Accel text={m} />
            </button>
            {m === "Page" && <PageMenu />}
          </div>
        ))}
      </nav>

      <div className="flex h-16">
        <Group>
          <ToolButton label="New"><NewIcon /></ToolButton>
          <ToolButton label="Open"><OpenIcon /></ToolButton>
          <ToolButton label="Save"><SaveIcon /></ToolButton>
          <ToolButton label="Print"><PrintIcon /></ToolButton>
          <Sep />
          <ToolButton label="Select"><CursorIcon /></ToolButton>
          <Sep />
          <ToolButton label="Delete"><DeleteIcon /></ToolButton>
          <Sep />
          <ToolButton label="Undo"><UndoIcon /></ToolButton>
          <ToolButton label="Redo"><RedoIcon /></ToolButton>
          <Sep />
          <ToolButton label="Insert marker"><Mark1 /></ToolButton>
          <Sep />
          <ToolButton label="Read data"><ReadDataIcon /></ToolButton>
          <Sep />
          <ToolButton label="Polygon"><ClearIcon /></ToolButton>
          <Sep />
          <ToolButton label="Fit"><FitIcon /></ToolButton>
          <ToolButton label="Zoom area"><ZoomEqIcon /></ToolButton>
          <Sep />
          <ToolButton label="Zoom in by two"><Zoom2 fill="url(#gRed)" sign="M4 26H16M10 20V32" /></ToolButton>
          <ToolButton label="Zoom out by two"><Zoom2 fill="url(#gGreen)" sign="M4 26H16" /></ToolButton>
          <ToolButton label="Restore zoom"><ZoomEqIcon /></ToolButton>
          <ToolButton label="Refresh"><RefreshIcon /></ToolButton>
          <ToolButton label="Stop refresh"><ClearIcon /></ToolButton>
        </Group>
        <Group>
          <div className="relative -mr-px h-[58px] w-[280px]">
            <select aria-label="Dataset" className="size-full appearance-none border border-b-0 border-[#cfcfcf] bg-[#fdfdfd] pt-1 pl-2 font-['Liberation_Mono',monospace] text-[15px]">
              <option>TestBench_MyFilter</option>
            </select>
            <svg viewBox="0 0 12 8" className="pointer-events-none absolute top-[26px] right-2 h-2 w-3" fill="none" aria-hidden="true">
              <path d="M1 1L6 6L11 1" stroke="#444" strokeWidth="1.200" />
            </svg>
          </div>
        </Group>
        <Group last>
          <ToolButton label="View all"><FitIcon /></ToolButton>
          <ToolButton label="Zoom in"><GridLens sign="M11 18H29M20 9V27" /></ToolButton>
          <ToolButton label="Zoom out"><GridLens sign="M11 18H29" /></ToolButton>
          <ToolButton label="Zoom original"><GridLens sign="M20 11C13 11 13 25 20 25C27 25 27 11 20 11Z" /></ToolButton>
        </Group>
      </div>

      <div className="flex h-16">
        <Group>
          <ToolButton label="Marker"><Mark1 /></ToolButton>
          <ToolButton label="Peak marker"><Mark2 /></ToolButton>
          <ToolButton label="Valley marker"><Mark3 /></ToolButton>
          <ToolButton label="Max marker"><Mark4 /></ToolButton>
          <ToolButton label="Min marker"><Mark5 /></ToolButton>
          <ToolButton label="Line marker"><Mark6 /></ToolButton>
          <ToolButton label="Marker left"><NavIcon d={LEFT} /></ToolButton>
          <ToolButton label="Marker right"><NavIcon d={RIGHT} /></ToolButton>
          <ToolButton label="Delta marker"><MutedTwin /></ToolButton>
          <ToolButton label="Offset marker"><MutedSlope /></ToolButton>
          <ToolButton label="Marker to valley"><MutedValley /></ToolButton>
          <ToolButton label="Marker to peak"><MutedTwin /></ToolButton>
          <ToolButton label="Marker reset"><MutedSlope /></ToolButton>
        </Group>
        <Group>
          <ToolButton label="First"><NavIcon active d={LEFT} /></ToolButton>
          <ToolButton label="Step"><NavIcon active d="M13 14H19V36H13ZM21 14L36 25L21 36Z" /></ToolButton>
          <ToolButton label="Play"><NavIcon active d={RIGHT} /></ToolButton>
          <ToolButton label="Last"><NavIcon active d="M30 14H36V36H30ZM14 14L28 25L14 36Z" /></ToolButton>
        </Group>
        <Group>
          <ToolButton label="Back"><NavIcon d={LEFT} /></ToolButton>
          <ToolButton label="Forward"><NavIcon d={RIGHT} /></ToolButton>
        </Group>
        <Group last>
          <ToolButton label="Limit band"><MaskIcon rails="M6 21H42M6 27H42" d="M8 20L12 10M14 20L18 10M20 20L24 10M26 20L30 10M32 20L36 10M38 20L42 10M8 28L13 38M14 28L19 38M20 28L25 38M26 28L31 38M32 28L37 38M38 28L42 36" /></ToolButton>
          <ToolButton label="Pass band"><MaskIcon rails="M6 13H42M6 37H42" d="M6 24L10 14M6 36L16 14M12 36L22 14M19 36L29 14M26 36L36 14M32 36L41 14M38 36L42 26" /></ToolButton>
          <ToolButton label="Upper limit"><MaskIcon rails="M1 15H47M6 21H42" d="M8 22L15 36M14 22L21 36M20 22L27 36M26 22L33 36M32 22L39 36M38 22L42 32" /></ToolButton>
          <ToolButton label="Lower limit"><MaskIcon rails="M1 33H47M5 27H41" d="M7 26L13 12M13 26L19 12M20 26L26 12M26 26L32 12M32 26L38 12M38 26L42 16" /></ToolButton>
          <Sep />
          <ToolButton label="Draw line"><ShapeIcon><path d="M8 8L40 39" stroke="#1a1250" strokeWidth="2.200" /></ShapeIcon></ToolButton>
          <ToolButton label="Draw rectangle"><ShapeIcon><rect x="6" y="7" width="35" height="18" fill="#ccc5e6" stroke="#1a1250" strokeWidth="2.200" /></ShapeIcon></ToolButton>
          <ToolButton label="Draw polygon"><ShapeIcon><path d="M25 5L42 23L24 41H19L23 26L7 22Z" fill="#ccc5e6" stroke="#2a1a66" strokeWidth="2.200" /></ShapeIcon></ToolButton>
          <ToolButton label="Draw polyline"><ShapeIcon><path d="M8 21L25 5L42 23L24 41H20L22 26" stroke="#2a1a66" strokeWidth="2.200" /></ShapeIcon></ToolButton>
        </Group>
      </div>

      <div className="flex min-h-0 flex-1">
        <aside className="mr-[6px] flex w-[108px] shrink-0 flex-col pt-[3px]">
          <div className="flex h-6 w-[107px] items-center border-2 border-[#b4b4b4] bg-[#dadada] pt-1 pl-2 text-[16px] leading-5">
            <span className="w-11">P...</span>
            <button type="button" aria-label="Float" className="mr-[18px]">
              <svg viewBox="0 0 12 12" className="size-3" fill="none" stroke="#333" strokeWidth="1.500">
                <path d="M4 4V1H11V7H8M4 2H11" />
                <rect x="1" y="5" width="7" height="6" />
                <path d="M1 6H8" />
              </svg>
            </button>
            <button type="button" aria-label="Close panel">
              <svg viewBox="0 0 12 12" className="size-3"><path d="M1 1L11 11M11 1L1 11" stroke="#333" strokeWidth="2.200" /></svg>
            </button>
          </div>
          <div className="mt-1 flex flex-1 flex-col gap-1 border border-[#868690] pt-[2px] pl-[2px] shadow-[inset_-1px_-1px_0_#fff]">
            {palette.map((p) => (
              <button key={p.label} type="button" aria-label={p.label} className="flex h-[74px] w-[82px] items-center justify-center rounded border border-[#c9c9c9] bg-[#fdfdfd]">
                <Svg64>{p.icon}</Svg64>
              </button>
            ))}
          </div>
        </aside>

        <main className="flex min-w-0 flex-1 flex-col">
          <div className="flex min-h-0 flex-1 pt-px">
            <section className="relative flex-1 overflow-hidden bg-white">
              <div className="absolute top-[190px] left-[742px]">
                <Plot min={-50} step={10} minor={2} height={162} axisColor="#000" traces={[{ data: s11, color: "#0000ff", name: "dB(S(1,1))" }, { data: s21, color: "#ff0000", name: "dB(S(1,2))" }]} />
              </div>
              <div className="absolute top-[437px] left-[742px]">
                <Plot min={-50} step={10} minor={2} height={161} axisColor="#ff0000" traces={[{ data: s21, color: "#ff0000", name: "dB(S(2,1))" }]} />
              </div>
              <div className="absolute top-[437px] left-[1048px]">
                <Plot min={-35} step={5} minor={0} height={161} axisColor="#ff0000" traces={[{ data: s11, color: "#ff0000", name: "dB(S(1,1))" }]} />
              </div>
              <DataTable />
            </section>
            <div className="flex w-[25px] flex-col items-center pt-[545px]">
              <div className="h-10 w-3 bg-[#868686]" />
            </div>
          </div>
          <div className="h-[25px] pt-[8px] pl-[888px]">
            <div className="h-[11px] w-[55px] bg-[#868686]" />
          </div>
          <div className="relative flex h-6 items-stretch">
            <svg viewBox="0 0 12 24" className="h-6 w-3" fill="none" aria-hidden="true">
              <path d="M0 0L5 17L12 22H12V0Z" fill="#fff" />
              <path d="M0 0L5 17L8 19L12 23" stroke="#000" />
            </svg>
            <button type="button" className="flex-1 border-b-2 border-[#7f7f7f] bg-white pt-1 font-['Liberation_Mono',monospace] text-[15px] leading-[18px]">page 1</button>
            <svg viewBox="0 0 14 24" className="mr-px h-6 w-[14px]" fill="none" aria-hidden="true">
              <path d="M0 22L7 17L13 0H0Z" fill="#fff" />
              <path d="M0 22L7 17L13 0" stroke="#000" />
            </svg>
            <span className="absolute right-[14px] bottom-0 font-['Liberation_Sans',sans-serif] text-[19px] leading-[22px] text-[#9b9b9b] [text-shadow:1px_1px_0_#fff]">CSDN @Chenyong970718</span>
          </div>
        </main>
      </div>

      <footer className="flex h-[10px] items-end border-t-2 border-[#b0b2bc] bg-[#d8dae8] pl-[952px]">
        <div className="h-[3px] w-14 rounded-t bg-[#eceef6]" />
      </footer>
    </div>
  );
}
